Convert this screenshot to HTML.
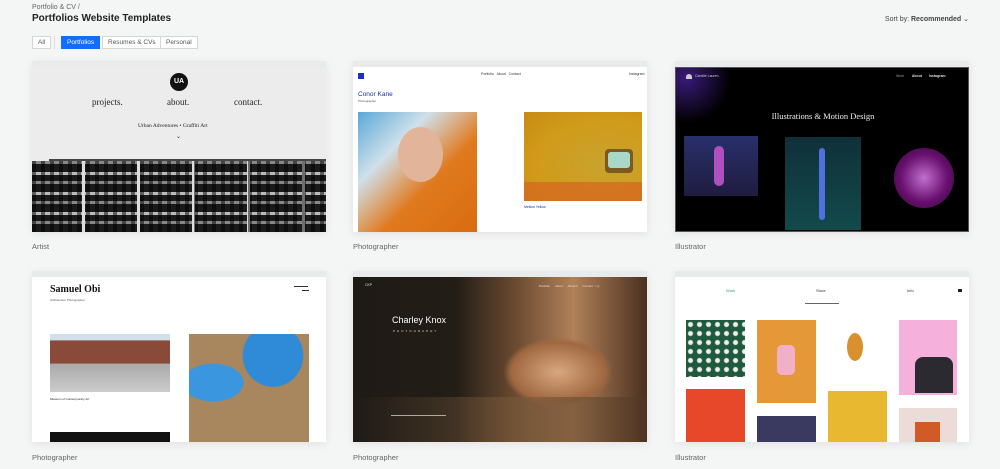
<!DOCTYPE html>
<html><head><meta charset="utf-8"><style>
*{margin:0;padding:0;box-sizing:border-box}
body{width:1000px;height:469px;background:#f4f5f5;font-family:"Liberation Sans",sans-serif;position:relative;overflow:hidden;color:#222}
.abs{position:absolute}
.crumb{left:32px;top:4px;font-size:7px;color:#666}
.h1{left:32px;top:13px;font-size:10px;font-weight:bold;color:#222}
.sort{right:31px;top:15px;font-size:7px;color:#444}
.chip{top:36px;height:13px;font-size:6.5px;line-height:11px;padding:0 5px;border:1px solid #d5d5d5;background:#fff;color:#555}
.card{position:absolute;width:294px;background:#fff;box-shadow:0 2px 8px rgba(0,0,0,.08)}
.bar{height:6px;background:#e9eaeb}
.lbl{position:absolute;font-size:7.5px;color:#666}
.serif{font-family:"Liberation Serif",serif}
</style></head><body>
<div class="abs crumb">Portfolio &amp; CV /</div>
<div class="abs h1">Portfolios Website Templates</div>
<div class="abs sort">Sort by: <b>Recommended</b> ⌄</div>
<div class="abs chip" style="left:32px">All</div>
<div class="abs" style="left:54px;top:36px;width:1px;height:13px;background:#ddd"></div>
<div class="abs chip" style="left:61px;background:#116dff;border-color:#116dff;color:#fff">Portfolios</div>
<div class="abs chip" style="left:102px">Resumes &amp; CVs</div>
<div class="abs chip" style="left:160px">Personal</div>

<!-- card 1 -->
<div class="card" style="left:32px;top:61px;height:171px">
<div class="bar"></div>
<div style="position:relative;height:165px;background:#ececec;overflow:hidden">
<div class="abs" style="left:138px;top:6px;width:18px;height:18px;border-radius:50%;background:#111;color:#fff;font-size:7px;line-height:18px;text-align:center;font-weight:bold">UA</div>
<div class="abs serif" style="left:60px;top:30px;font-size:9px">projects.</div>
<div class="abs serif" style="left:135px;top:30px;font-size:9px">about.</div>
<div class="abs serif" style="left:202px;top:30px;font-size:9px">contact.</div>
<div class="abs serif" style="left:106px;top:56px;font-size:5.5px">Urban Adventures • Graffiti Art</div>
<div class="abs" style="left:144px;top:66px;font-size:6px">⌄</div>
<div class="abs" style="left:17px;top:92px;width:277px;height:2px;background:#444"></div>
<div class="abs" style="left:0;top:94px;width:294px;height:71px;background:#1a1a1a"></div>
<div class="abs" style="left:0;top:94px;width:294px;height:71px;background:repeating-linear-gradient(180deg,#888 0 3px,transparent 3px 11px,#bbb 11px 14px,transparent 14px 20px)"></div>
<div class="abs" style="left:0;top:94px;width:294px;height:71px;background:repeating-linear-gradient(90deg,transparent 0 50px,#ddd 50px 53px,transparent 53px 55px)"></div>
<div class="abs" style="left:0;top:94px;width:294px;height:71px;background:repeating-linear-gradient(90deg,rgba(0,0,0,.5) 0 4px,transparent 4px 9px)"></div>
</div></div>
<div class="lbl" style="left:32px;top:242px">Artist</div>

<!-- card 2 -->
<div class="card" style="left:353px;top:61px;height:171px">
<div class="bar"></div>
<div style="position:relative;height:165px;background:#fff">
<div class="abs" style="left:5px;top:6px;width:6px;height:6px;background:#1d2fc7"></div>
<div class="abs" style="left:128px;top:5px;font-size:3.5px;color:#333">Portfolio &nbsp; About &nbsp; Contact</div>
<div class="abs" style="left:276px;top:5px;font-size:3.5px;color:#333">Instagram</div>
<div class="abs" style="left:5px;top:24px;font-size:6.5px;color:#1d2fa0">Conor Kane</div>
<div class="abs" style="left:5px;top:32px;font-size:3px;color:#555">Photographer</div>
<div class="abs" style="left:5px;top:45px;width:119px;height:120px;background:linear-gradient(135deg,#5aa8d8 0%,#cfe0ea 30%,#e07a1e 60%,#d96b10 100%)"></div>
<div class="abs" style="left:45px;top:60px;width:45px;height:55px;border-radius:50%;background:#e2b49a"></div>
<div class="abs" style="left:171px;top:45px;width:118px;height:89px;background:radial-gradient(ellipse at 70% 60%,#c9a32e,#d09b1a 60%,#c88a14)"></div>
<div class="abs" style="left:252px;top:82px;width:28px;height:24px;border-radius:4px;background:#7a5a20"><div style="margin:3px;height:16px;background:#a9d8c8;border-radius:3px"></div></div>
<div class="abs" style="left:171px;top:115px;width:118px;height:19px;background:#d46a20;opacity:.8"></div>
<div class="abs" style="left:171px;top:138px;font-size:3.5px;color:#1d2fa0">Mellow Yellow</div>
</div></div>
<div class="lbl" style="left:353px;top:242px">Photographer</div>

<!-- card 3 -->
<div class="card" style="left:675px;top:61px;height:171px">
<div class="bar"></div>
<div style="position:relative;height:165px;background:radial-gradient(circle at 10px 10px,#3a1a7a 0,#000 45px);background-color:#000;border:1px solid #555">
<div class="abs" style="left:10px;top:6px;width:6px;height:5px;border-radius:3px 3px 0 0;background:#ccc"></div>
<div class="abs" style="left:19px;top:6px;font-size:3.5px;color:#ccc">Camille Lauren</div>
<div class="abs" style="left:220px;top:6px;font-size:3.5px;color:#999">Work &nbsp;&nbsp;&nbsp;&nbsp;&nbsp;&nbsp; <b style="color:#ddd">About</b> &nbsp;&nbsp;&nbsp;&nbsp;&nbsp; <b style="color:#ddd">Instagram</b></div>
<div class="abs serif" style="left:0;width:294px;text-align:center;top:43px;font-size:8.5px;color:#eee">Illustrations &amp; Motion Design</div>
<div class="abs" style="left:8px;top:68px;width:74px;height:60px;background:linear-gradient(#28306a,#1f1c40)"></div>
<div class="abs" style="left:38px;top:78px;width:10px;height:40px;border-radius:5px;background:#b050c0"></div>
<div class="abs" style="left:109px;top:69px;width:76px;height:93px;background:linear-gradient(#10303a,#124a4a)"></div>
<div class="abs" style="left:143px;top:80px;width:6px;height:72px;border-radius:3px;background:#5070e0"></div>
<div class="abs" style="left:218px;top:80px;width:60px;height:60px;border-radius:50%;background:radial-gradient(#c070d0,#6a1070 55%,#2a0830)"></div>
</div></div>
<div class="lbl" style="left:675px;top:242px">Illustrator</div>

<!-- card 4 -->
<div class="card" style="left:32px;top:271px;height:171px">
<div class="bar"></div>
<div style="position:relative;height:165px;background:#fff;overflow:hidden">
<div class="abs serif" style="left:18px;top:7px;font-size:10px;font-weight:bold;color:#111">Samuel Obi</div>
<div class="abs" style="left:18px;top:21px;font-size:3px;color:#555">Architecture Photographer</div>
<div class="abs" style="left:262px;top:9px;width:14px;height:1px;background:#333"></div>
<div class="abs" style="left:270px;top:13px;width:7px;height:1px;background:#333"></div>
<div class="abs" style="left:18px;top:57px;width:120px;height:58px;background:linear-gradient(180deg,#cfe0ea 0,#cfe0ea 10%,#8a4a3a 12%,#8a4a3a 50%,#aaa 52%,#ccc 100%)"></div>
<div class="abs" style="left:18px;top:120px;font-size:3px;color:#222">Museum of Contemporary Art</div>
<div class="abs" style="left:18px;top:155px;width:120px;height:10px;background:#111"></div>
<div class="abs" style="left:157px;top:57px;width:120px;height:108px;background:radial-gradient(ellipse at 70% 20%,#2f8ad8 0 25%,transparent 26%),radial-gradient(ellipse at 20% 45%,#3b96e0 0 22%,transparent 23%),#a8865e"></div>
</div></div>
<div class="lbl" style="left:32px;top:453px">Photographer</div>

<!-- card 5 -->
<div class="card" style="left:353px;top:271px;height:171px">
<div class="bar"></div>
<div style="position:relative;height:165px;background:linear-gradient(90deg,#1e1a16 0,#231d17 35%,#6a4a30 55%,#b08058 75%,#4a3020 100%);overflow:hidden">
<div class="abs" style="left:150px;top:60px;width:110px;height:70px;border-radius:50%;background:radial-gradient(#d8a880,#a06840 60%,transparent 70%)"></div>
<div class="abs" style="left:0;top:120px;width:294px;height:45px;background:linear-gradient(90deg,rgba(0,0,0,0) 0,rgba(120,90,60,.6) 60%,rgba(80,55,35,.6))"></div>
<div class="abs" style="left:12px;top:6px;font-size:3.5px;color:#ddd">CKP</div>
<div class="abs" style="left:186px;top:7px;font-size:3px;color:#ddd">Portfolio &nbsp;&nbsp;&nbsp;&nbsp; About &nbsp;&nbsp;&nbsp;&nbsp; Albums &nbsp;&nbsp;&nbsp;&nbsp; Contact &nbsp; f ◎</div>
<div class="abs" style="left:39px;top:38px;font-size:9px;color:#fff">Charley Knox</div>
<div class="abs" style="left:40px;top:52px;font-size:3px;letter-spacing:2px;color:#ddd">PHOTOGRAPHY</div>
<div class="abs" style="left:38px;top:138px;width:55px;height:1px;background:#aaa"></div>
</div></div>
<div class="lbl" style="left:353px;top:453px">Photographer</div>

<!-- card 6 -->
<div class="card" style="left:675px;top:271px;height:171px">
<div class="bar"></div>
<div style="position:relative;height:165px;background:#fff;overflow:hidden">
<div class="abs" style="left:51px;top:11px;font-size:4px;color:#3a9a70">Work</div>
<div class="abs" style="left:141px;top:11px;font-size:4px;color:#333">Store</div>
<div class="abs" style="left:232px;top:11px;font-size:4px;color:#333">Info</div>
<div class="abs" style="left:283px;top:12px;width:4px;height:3px;background:#222"></div>
<div class="abs" style="left:130px;top:26px;width:34px;height:1px;background:#666"></div>
<div class="abs" style="left:11px;top:43px;width:59px;height:57px;background:radial-gradient(circle,#eee 0 2px,transparent 3px) 0 0/9px 9px,#1f5a3c"></div>
<div class="abs" style="left:82px;top:43px;width:59px;height:83px;background:#e49838"></div>
<div class="abs" style="left:102px;top:68px;width:18px;height:30px;background:#f2b0c8;border-radius:5px"></div>
<div class="abs" style="left:172px;top:56px;width:16px;height:28px;border-radius:50%;background:#d8912c"></div>
<div class="abs" style="left:224px;top:43px;width:58px;height:75px;background:#f6b0dc"></div>
<div class="abs" style="left:240px;top:80px;width:38px;height:36px;background:#2a2a30;border-radius:8px 8px 0 0"></div>
<div class="abs" style="left:11px;top:112px;width:59px;height:53px;background:#e8482a"></div>
<div class="abs" style="left:82px;top:139px;width:59px;height:26px;background:#3a3a60"></div>
<div class="abs" style="left:153px;top:114px;width:59px;height:51px;background:#e8b830"></div>
<div class="abs" style="left:224px;top:131px;width:58px;height:34px;background:#ecdcd8"></div>
<div class="abs" style="left:240px;top:145px;width:25px;height:20px;background:#d05a28"></div>
</div></div>
<div class="lbl" style="left:675px;top:453px">Illustrator</div>
</body></html>
